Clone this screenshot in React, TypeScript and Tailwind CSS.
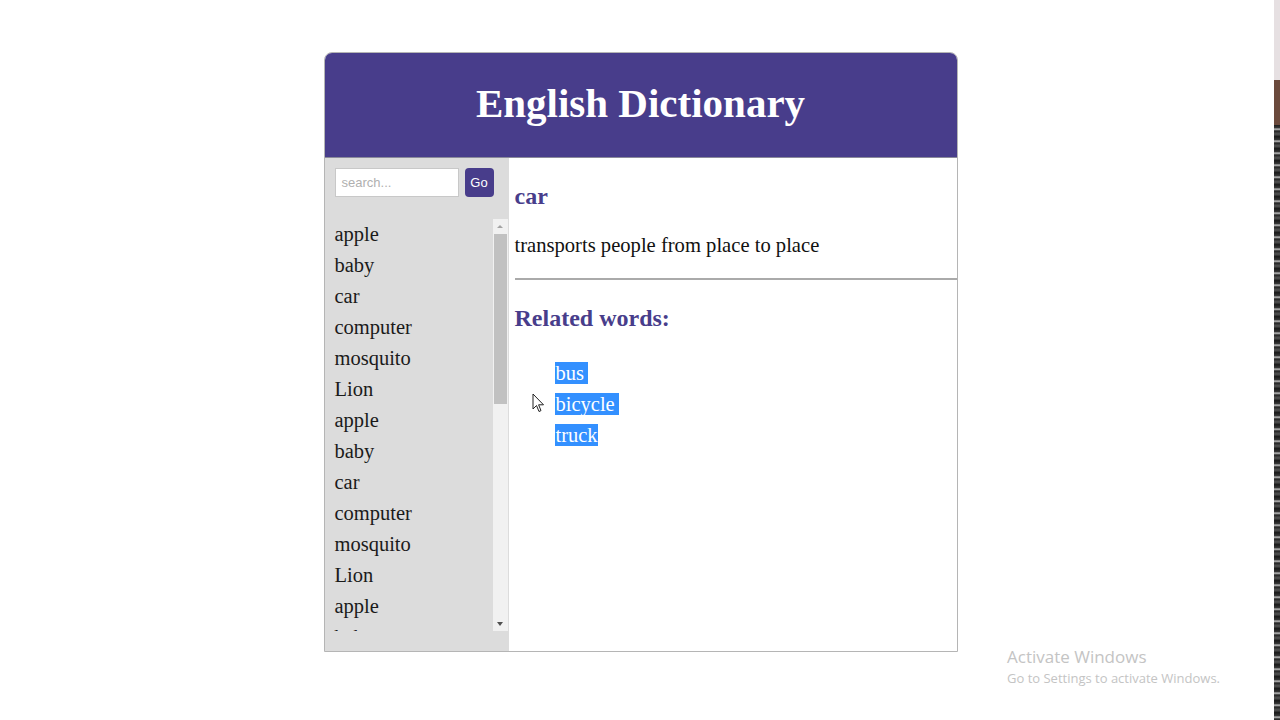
import React from "react";

const words = ["apple","baby","car","computer","mosquito","Lion","apple","baby","car","computer","mosquito","Lion","apple","baby"];

export default function App() {
  return (
    <div className="relative w-[1280px] h-[720px] bg-white overflow-hidden" style={{ fontFamily: '"Liberation Serif", "Times New Roman", serif' }}>
      <div className="pt-[52px] flex justify-center">
        <div className="w-[634px] h-[600px] ml-[1px] border border-[#b5b5b5] rounded-t-[8px] flex flex-col overflow-hidden">
          <div className="h-[105px] bg-[#483d8b] flex items-center justify-center border-b border-[#8a8a9a]">
            <h1 className="text-white font-bold text-[41px] leading-none mt-[-4px]">English Dictionary</h1>
          </div>
          <div className="flex flex-1 min-h-0">
            <div className="w-[184px] bg-[#dcdcdc] flex flex-col">
              <div className="flex items-center gap-[6px] pl-[10px] pt-[10px]">
                <div className="w-[124px] h-[29px] bg-white border border-[#c8c8c8] flex items-center pl-[6px] text-[13px] text-[#b0b0b0]" style={{ fontFamily: '"Liberation Sans", Arial, sans-serif' }}>search...</div>
                <div className="w-[29px] h-[29px] bg-[#483d8b] rounded-[4px] flex items-center justify-center text-white text-[13px]" style={{ fontFamily: '"Liberation Sans", Arial, sans-serif' }}>Go</div>
              </div>
              <div className="flex mt-[22px] h-[412px]">
                <div className="flex-1 overflow-hidden pl-[10px]">
                  {words.map((w, i) => (
                    <div key={i} className="h-[31px] leading-[31px] text-[20.5px] text-[#1a1a1a]">{w}</div>
                  ))}
                </div>
                <div className="w-[15px] mr-[1px] bg-[#f1f1f1] flex flex-col items-center">
                  <div className="h-[15px] flex items-center justify-center">
                    <div className="w-0 h-0 border-l-[3px] border-r-[3px] border-b-[3px] border-l-transparent border-r-transparent border-b-[#a3a3a3]" />
                  </div>
                  <div className="w-[13px] h-[170px] bg-[#c1c1c1]" />
                  <div className="flex-1" />
                  <div className="h-[15px] flex items-center justify-center">
                    <div className="w-0 h-0 border-l-[3px] border-r-[3px] border-t-[4px] border-l-transparent border-r-transparent border-t-[#505050]" />
                  </div>
                </div>
              </div>
            </div>
            <div className="flex-1 bg-white">
              <div className="pl-[6px] pt-[23px]">
                <h2 className="text-[#483d8b] font-bold text-[24px] leading-[30px]">car</h2>
                <p className="text-[20.6px] text-[#111] leading-[30px] mt-[19px]">transports people from place to place</p>
              </div>
              <div className="h-[2px] bg-[#aaaaaa] mt-[18px] ml-[6px]" />
              <div className="pl-[6px] pt-[23px]">
                <h2 className="text-[#483d8b] font-bold text-[24px] leading-[30px]">Related words:</h2>
                <ul className="pl-[40px] mt-[25px]">
                  {["bus","bicycle","truck"].map((w, i) => (
                    <li key={w} className="h-[31px] leading-[31px] text-[20.5px]">
                      <span className={i < 2 ? "bg-[#3390ff] text-white pl-[1px] pr-[4px]" : "bg-[#3390ff] text-white pl-[1px]"}>{w}</span>
                    </li>
                  ))}
                </ul>
              </div>
            </div>
          </div>
        </div>
      </div>

      {/* mouse cursor */}
      <svg className="absolute left-[532px] top-[393px]" width="14" height="21" viewBox="0 0 14 21">
        <path d="M1 1 L1 16 L4.5 12.5 L7 18.5 L9 17.6 L6.6 11.8 L11.5 11.8 Z" fill="white" stroke="#222" strokeWidth="1" strokeLinejoin="round" />
      </svg>

      {/* windows watermark */}
      <div className="absolute left-[1007px] top-[646px] text-[#c4c4c4]" style={{ fontFamily: '"Open Sans", "Noto Sans", sans-serif' }}>
        <div className="text-[17px] leading-[22px]">Activate Windows</div>
        <div className="text-[13px] leading-[20px]">Go to Settings to activate Windows.</div>
      </div>

      {/* right edge strip */}
      <div className="absolute right-0 top-0 w-[6px] h-[720px] flex flex-col">
        <div className="h-[80px] bg-[#e6e0e2]" />
        <div className="h-[45px] bg-[#6b4a3c]" />
        <div className="flex-1 bg-[repeating-linear-gradient(180deg,#1c1c1c_0px,#3a3a3a_3px,#cfcfcf_4px,#222_6px,#555_9px,#111_12px)]" />
      </div>
    </div>
  );
}
